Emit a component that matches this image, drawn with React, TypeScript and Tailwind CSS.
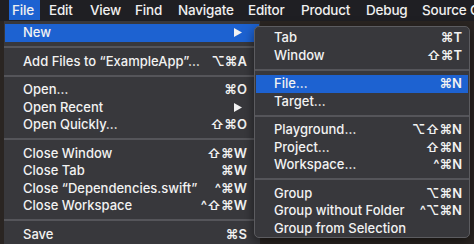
import React from "react";

type Item =
  | { kind: "item"; label: string; sc?: string; arrow?: boolean; active?: boolean }
  | { kind: "sep" };

const mainItems: Item[] = [
  { kind: "item", label: "New", arrow: true, active: true },
  { kind: "sep" },
  { kind: "item", label: "Add Files to “ExampleApp”…", sc: "⌥⌘A" },
  { kind: "sep" },
  { kind: "item", label: "Open…", sc: "⌘O" },
  { kind: "item", label: "Open Recent", arrow: true },
  { kind: "item", label: "Open Quickly…", sc: "⇧⌘O" },
  { kind: "sep" },
  { kind: "item", label: "Close Window", sc: "⇧⌘W" },
  { kind: "item", label: "Close Tab", sc: "⌘W" },
  { kind: "item", label: "Close “Dependencies.swift”", sc: "^⌘W" },
  { kind: "item", label: "Close Workspace", sc: "^⇧⌘W" },
  { kind: "sep" },
  { kind: "item", label: "Save", sc: "⌘S" },
];

const subItems: Item[] = [
  { kind: "item", label: "Tab", sc: "⌘T" },
  { kind: "item", label: "Window", sc: "⇧⌘T" },
  { kind: "sep" },
  { kind: "item", label: "File…", sc: "⌘N", active: true },
  { kind: "item", label: "Target…" },
  { kind: "sep" },
  { kind: "item", label: "Playground…", sc: "⌥⇧⌘N" },
  { kind: "item", label: "Project…", sc: "⇧⌘N" },
  { kind: "item", label: "Workspace…", sc: "^⌘N" },
  { kind: "sep" },
  { kind: "item", label: "Group", sc: "⌥⌘N" },
  { kind: "item", label: "Group without Folder", sc: "^⌥⌘N" },
  { kind: "item", label: "Group from Selection" },
];

const font = { fontFamily: "Inter, 'Noto Sans', 'DejaVu Sans', sans-serif" };

function Arrow() {
  return (
    <svg width="8" height="9" viewBox="0 0 8 9" className="shrink-0">
      <path d="M0 0 L8 4.5 L0 9 Z" fill="#f2f2f2" />
    </svg>
  );
}

function Rows({ items, pl, pr }: { items: Item[]; pl: string; pr: string }) {
  return (
    <>
      {items.map((it, i) =>
        it.kind === "sep" ? (
          <div key={i} className="h-[11px] flex items-center">
            <div className="h-[2px] w-full bg-[#55555a]" />
          </div>
        ) : (
          <div
            key={i}
            className={`h-[17.5px] mx-[1px] flex items-center justify-between ${pl} ${pr} ${
              it.active ? "bg-[#1d62d1]" : ""
            }`}
          >
            <span className="text-[13px] font-medium text-[#f2f2f2] whitespace-nowrap leading-none">
              {it.label}
            </span>
            {it.sc && (
              <span
                className="text-[13px] font-semibold text-[#f2f2f2] whitespace-nowrap leading-none"
                style={{ fontFamily: "Inter, 'DejaVu Sans', sans-serif" }}
              >
                {it.sc}
              </span>
            )}
            {it.arrow && (
              <span className="mr-[5px]">
                <Arrow />
              </span>
            )}
          </div>
        )
      )}
    </>
  );
}

const bar: { label: string; w: string }[] = [
  { label: "File", w: "w-[31px]" },
  { label: "Edit", w: "w-[41px]" },
  { label: "View", w: "w-[45px]" },
  { label: "Find", w: "w-[43px]" },
  { label: "Navigate", w: "w-[70px]" },
  { label: "Editor", w: "w-[53px]" },
  { label: "Product", w: "w-[65px]" },
  { label: "Debug", w: "w-[56px]" },
  { label: "Source Control", w: "w-[100px]" },
];

export default function App() {
  return (
    <div className="w-[474px] h-[244px] overflow-hidden bg-[#2a2522] relative" style={font}>
      <div className="h-[21px] bg-[#1f1f23] flex items-start pl-[9px] whitespace-nowrap overflow-hidden">
        {bar.map((b, i) => (
          <div
            key={b.label}
            className={`${b.w} shrink-0 flex items-center pl-[3px] text-[13.5px] font-medium tracking-[-0.2px] text-[#f0f0f0] h-[20px] ${
              i === 0 ? "bg-[#1d62d1] mr-[6px]" : ""
            }`}
          >
            {b.label}
          </div>
        ))}
      </div>
      <div className="ml-[4px] w-[256px] h-[223px] bg-[#38383c] pt-[3px]">
        <Rows items={mainItems} pl="pl-[18px]" pr="pr-[12px]" />
      </div>
      <div className="absolute left-[254px] top-[26px] w-[216px] h-[212px] bg-[#38383c] border border-[#5c5c60] rounded-[5px] pt-[2px] shadow-[0_4px_12px_rgba(0,0,0,0.5)]">
        <Rows items={subItems} pl="pl-[18px]" pr="pr-[6px]" />
      </div>
    </div>
  );
}
